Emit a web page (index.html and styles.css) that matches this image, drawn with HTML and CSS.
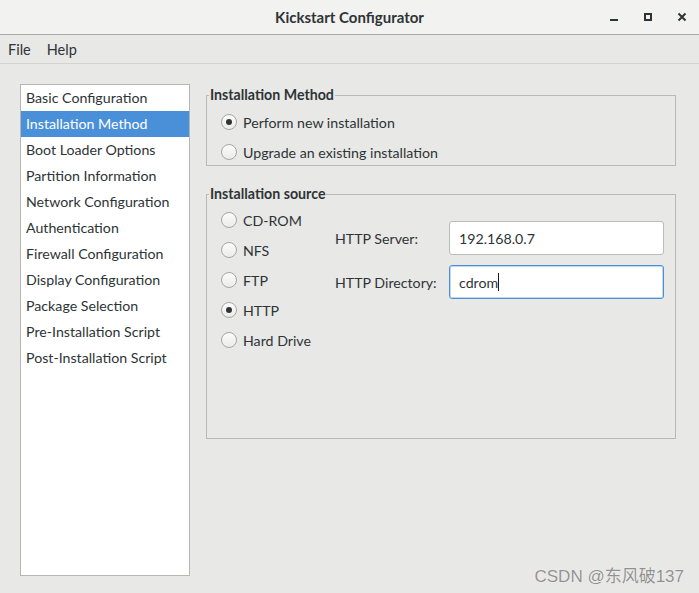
FILE: index.html
```html
<!DOCTYPE html>
<html lang="en">
<head>
<meta charset="utf-8">
<title>Kickstart Configurator</title>
<link rel="stylesheet" href="styles.css">
</head>
<body>
<div class="window">
  <header class="titlebar">
    <div class="tb-spacer"></div>
    <div class="title">Kickstart Configurator</div>
    <div class="controls">
      <span class="ctl"><span class="ico-min"></span></span>
      <span class="ctl"><span class="ico-max"></span></span>
      <span class="ctl">
        <svg width="10" height="10" viewBox="0 0 10 10"><path d="M1.5 1.5 L8.5 8.5 M8.5 1.5 L1.5 8.5" stroke="#2e3436" stroke-width="2" fill="none"/></svg>
      </span>
    </div>
  </header>
  <nav class="menubar">
    <span class="menu-item">File</span>
    <span class="menu-item">Help</span>
  </nav>
  <div class="content">
    <ul class="sidebar">
      <li>Basic Configuration</li>
      <li class="selected">Installation Method</li>
      <li>Boot Loader Options</li>
      <li>Partition Information</li>
      <li>Network Configuration</li>
      <li>Authentication</li>
      <li>Firewall Configuration</li>
      <li>Display Configuration</li>
      <li>Package Selection</li>
      <li>Pre-Installation Script</li>
      <li>Post-Installation Script</li>
    </ul>
    <div class="main">
      <fieldset class="group">
        <legend>Installation Method</legend>
        <div class="method-body">
          <div class="radio-row"><span class="radio checked"></span>Perform new installation</div>
          <div class="radio-row"><span class="radio"></span>Upgrade an existing installation</div>
        </div>
      </fieldset>
      <fieldset class="group source">
        <legend>Installation source</legend>
        <div class="source-body">
          <div class="radio-col">
            <div class="radio-row tall"><span class="radio"></span>CD-ROM</div>
            <div class="radio-row tall"><span class="radio"></span>NFS</div>
            <div class="radio-row tall"><span class="radio"></span>FTP</div>
            <div class="radio-row tall"><span class="radio checked"></span>HTTP</div>
            <div class="radio-row tall"><span class="radio"></span>Hard Drive</div>
          </div>
          <div class="http-grid">
            <span class="field-label">HTTP Server:</span>
            <div class="entry">192.168.0.7</div>
            <span class="field-label">HTTP Directory:</span>
            <div class="entry focused">cdrom<span class="caret"></span></div>
          </div>
        </div>
      </fieldset>
    </div>
  </div>
  <div class="watermark">CSDN @东风破137</div>
</div>
</body>
</html>
```

FILE: styles.css
```css
* { box-sizing: border-box; }

html, body {
  margin: 0;
  padding: 0;
}

body {
  width: 699px;
  height: 593px;
  overflow: hidden;
  background: #e8e8e7;
  font-family: Lato, "Noto Sans", sans-serif;
  font-size: 14.2px;
  color: #2e3436;
}

.window {
  position: relative;
  width: 699px;
  height: 593px;
}

.titlebar {
  height: 35px;
  background: #f2f2f1;
  border-bottom: 1px solid #a8a8a5;
  display: grid;
  grid-template-columns: 1fr auto 1fr;
  align-items: center;
}

.title {
  font-weight: bold;
  font-size: 15px;
  padding-bottom: 1px;
}

.controls {
  display: flex;
  justify-content: flex-end;
  height: 34px;
}

.ctl {
  width: 34px;
  height: 34px;
  display: flex;
  align-items: center;
  justify-content: center;
  padding-bottom: 1px;
}

.ico-min {
  width: 8px;
  height: 2px;
  background: #2e3436;
  margin-top: 7px;
}

.ico-max {
  width: 8px;
  height: 8px;
  border: 2px solid #2e3436;
}

.menubar {
  height: 29px;
  border-bottom: 1px solid #d3d3d0;
  display: flex;
  align-items: center;
  padding-top: 1px;
  font-size: 14.5px;
}

.menu-item {
  padding: 0 8px;
}

.content {
  display: flex;
  gap: 16px;
  padding: 20px 0 0 20px;
}

.sidebar {
  list-style: none;
  margin: 0;
  padding: 0;
  width: 170px;
  height: 492px;
  background: #ffffff;
  border: 1px solid #b6b6b3;
}

.sidebar li {
  height: 26px;
  line-height: 25px;
  padding-left: 5px;
  white-space: nowrap;
}

.sidebar li.selected {
  background: #4a90d9;
  color: #ffffff;
}

.main {
  width: 470px;
  display: flex;
  flex-direction: column;
}

.group {
  margin: 0;
  padding: 0;
  min-width: 0;
  border: 1px solid #b9b9b6;
}

.group legend {
  padding: 0 1px;
  margin-left: 2px;
  line-height: 22px;
  font-weight: bold;
}

.source {
  margin-top: 17px;
}

.method-body {
  display: flex;
  flex-direction: column;
  gap: 6px;
  padding: 4px 0 1px 14px;
}

.radio-row {
  height: 24px;
  display: flex;
  align-items: center;
  gap: 6px;
  white-space: nowrap;
}

.radio-row.tall {
  height: 30px;
}

.radio {
  width: 16px;
  height: 16px;
  border-radius: 50%;
  border: 1px solid #a6a6a3;
  background: linear-gradient(#fcfcfc, #ebebea);
  flex: none;
  display: flex;
  align-items: center;
  justify-content: center;
}

.radio.checked::after {
  content: "";
  width: 6px;
  height: 6px;
  border-radius: 50%;
  background: #2e3436;
}

.source-body {
  display: flex;
  height: 233px;
  padding: 0 11px 0 14px;
}

.radio-col {
  width: 114px;
  display: flex;
  flex-direction: column;
}

.http-grid {
  margin-top: 16px;
  display: grid;
  grid-template-columns: 114px 215px;
  row-gap: 10px;
  align-items: center;
  align-content: start;
}

.field-label {
  white-space: nowrap;
}

.entry {
  height: 34px;
  background: #ffffff;
  border: 1px solid #bcbcb9;
  border-radius: 3px;
  padding-left: 9px;
  display: flex;
  align-items: center;
}

.entry.focused {
  border: 1px solid #4a90d9;
  box-shadow: inset 0 0 0 1px rgba(74, 144, 217, 0.35);
}

.caret {
  width: 1px;
  height: 18px;
  background: #1a1a1a;
}

.watermark {
  position: absolute;
  right: 15px;
  bottom: 6px;
  font-family: "Liberation Sans", "Noto Sans CJK SC", sans-serif;
  font-size: 17px;
  color: rgba(110, 110, 110, 0.75);
  text-shadow: 0 0 1px rgba(255, 255, 255, 0.9);
}
```
